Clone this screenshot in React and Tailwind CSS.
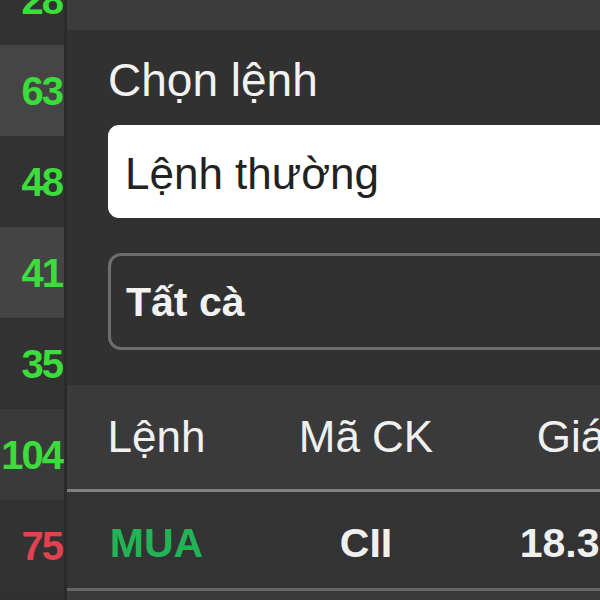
export default function App() {
  const rows = [
    { v: "28", c: "text-[#3ddc3d]", bg: "bg-[#323232]" },
    { v: "63", c: "text-[#3ddc3d]", bg: "bg-[#454545]" },
    { v: "48", c: "text-[#3ddc3d]", bg: "bg-[#323232]" },
    { v: "41", c: "text-[#3ddc3d]", bg: "bg-[#444444]" },
    { v: "35", c: "text-[#3ddc3d]", bg: "bg-[#323232]" },
    { v: "104", c: "text-[#3ddc3d]", bg: "bg-[#3a3a3a]" },
    { v: "75", c: "text-[#e0424f]", bg: "bg-[#323232]" },
  ];
  return (
    <div
      className="flex w-[600px] h-[600px] overflow-hidden bg-[#313131]"
      style={{ fontFamily: '"Liberation Sans", Arial, sans-serif' }}
    >
      <div className="flex flex-col w-[67px] shrink-0 -mt-[46px] border-r-[3px] border-[#2a2a2a]">
        {rows.map((r) => (
          <div
            key={r.v}
            className={`h-[91px] shrink-0 flex items-center justify-end pr-[2px] ${r.bg}`}
          >
            <span className={`text-[40px] font-bold tracking-[-2px] ${r.c}`}>{r.v}</span>
          </div>
        ))}
      </div>
      <div className="flex flex-col w-[700px] shrink-0">
        <div className="h-[30px] bg-[#3b3b3b]" />
        <div className="flex flex-col bg-[#313131] pl-[41px] pb-[35px]">
          <div className="h-[95px] flex items-center text-[46px] text-[#f2f2f2] leading-none pt-[4px]">
            Chọn lệnh
          </div>
          <div className="h-[93px] bg-white rounded-[11px] flex items-center pl-[17px] pt-[5px] text-[44px] text-[#222]">
            Lệnh thường
          </div>
          <div className="mt-[35px] h-[97px] rounded-[13px] border-[3px] border-[#6e6e6e] flex items-center pl-[15px] pt-[3px] text-[41px] font-bold text-[#f2f2f2]">
            Tất cà
          </div>
        </div>
        <div className="h-[104px] bg-[#3a3a3a] flex items-center text-[44px] text-[#f0f0f0]">
          <div className="w-[179px] text-center">Lệnh</div>
          <div className="w-[240px] text-center">Mã CK</div>
          <div className="w-[170px] text-center">Giá</div>
        </div>
        <div className="h-[3px] bg-[#808080]" />
        <div className="h-[96px] bg-[#333333] flex items-center pt-[8px] text-[41px] font-bold">
          <div className="w-[179px] text-center text-[#22b356]">MUA</div>
          <div className="w-[240px] text-center text-[#f0f0f0]">CII</div>
          <div className="w-[170px] text-center text-[#f0f0f0]">18.35</div>
        </div>
        <div className="h-[3px] bg-[#666666]" />
        <div className="flex-1 bg-[#3a3a3a]" />
      </div>
    </div>
  );
}
